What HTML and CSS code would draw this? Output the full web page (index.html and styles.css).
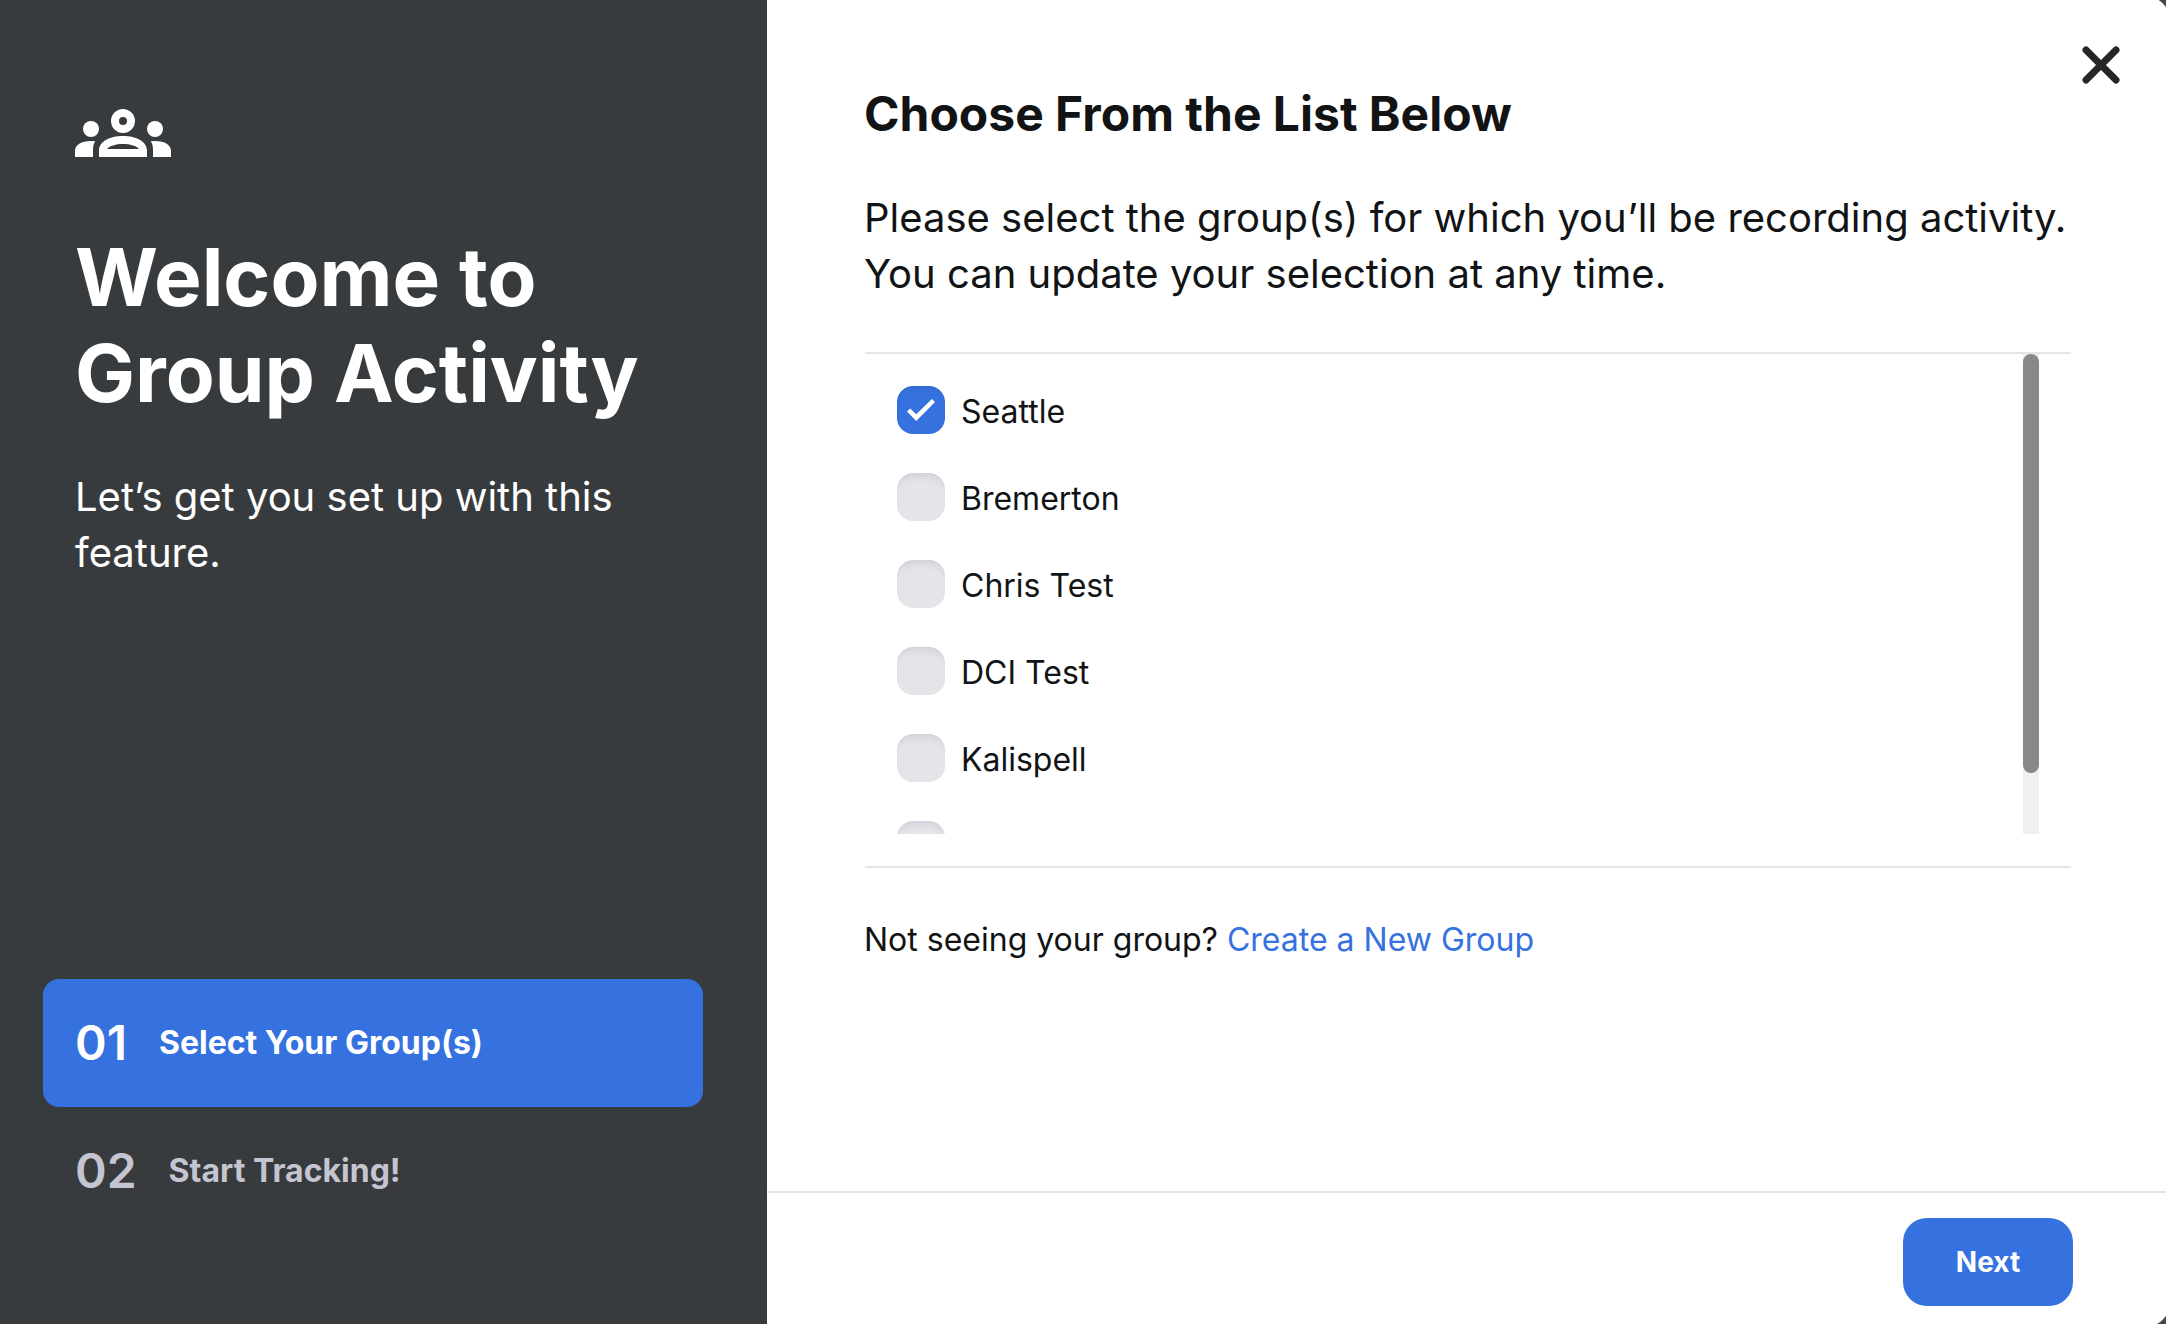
FILE: index.html
```html
<!DOCTYPE html>
<html lang="en">
<head>
    <meta charset="UTF-8">
    <meta name="viewport" content="width=device-width, initial-scale=1.0">
    <title>Group Activity</title>
    <link rel="stylesheet" href="styles.css">
</head>
<body>

    <div class="modal" role="dialog" aria-labelledby="modal-title">

        <!-- left : intro + steps -->
        <aside class="intro">
            <svg class="intro-icon" viewBox="0 0 96 48" fill="#fff" aria-hidden="true">
                <path fill-rule="evenodd" d="M48 0a12 12 0 1 1 0 24a12 12 0 1 1 0-24zM48 8a4 4 0 1 0 0 8a4 4 0 1 0 0-8z"/>
                <circle cx="16" cy="20" r="8"/>
                <circle cx="80" cy="20" r="8"/>
                <path fill-rule="evenodd" d="M24 48v-6.500C24 33 34 27 48 27s24 6 24 14.500V48zM32 40h32c-2-3-9-5-16-5s-14 2-16 5z"/>
                <path d="M0 48v-6C0 36 6 32 16 32q2 0 4.300.300C18.500 35 18 37.500 18 41v7z"/>
                <path d="M96 48v-6c0-6-6-10-16-10q-2 0-4.300.300C77.500 35 78 37.500 78 41v7z"/>
            </svg>
            <h1 id="modal-title">Welcome to Group Activity</h1>
            <p>Let’s get you set up with this feature.</p>

            <ol class="steps">
                <li class="step active"><span class="step-number">01</span>Select Your Group(s)</li>
                <li class="step"><span class="step-number">02</span>Start Tracking!</li>
            </ol>
        </aside>

        <!-- right : group list -->
        <main class="panel">
            <button class="close" type="button" aria-label="Close">
                <svg viewBox="0 0 38 38" fill="none" stroke="#242628" stroke-width="7" stroke-linecap="round" aria-hidden="true">
                    <path d="M4 4l30 30M34 4l-30 30"/>
                </svg>
            </button>

            <div class="content">
                <h2>Choose From the List Below</h2>
                <p class="lead">Please select the group(s) for which you’ll be recording activity. You can update your selection at any time.</p>

                <div class="list-box">
                    <div class="group-list">
                        <label class="group"><input type="checkbox" checked><span>Seattle</span></label>
                        <label class="group"><input type="checkbox"><span>Bremerton</span></label>
                        <label class="group"><input type="checkbox"><span>Chris Test</span></label>
                        <label class="group"><input type="checkbox"><span>DCI Test</span></label>
                        <label class="group"><input type="checkbox"><span>Kalispell</span></label>
                        <label class="group"><input type="checkbox" aria-label="Group"></label>
                    </div>
                    <div class="scrollbar"><div class="scrollbar-thumb"></div></div>
                </div>

                <p class="hint">Not seeing your group? <a href="#">Create a New Group</a></p>
            </div>

            <footer class="actions">
                <button class="next" type="button">Next</button>
            </footer>
        </main>

    </div>

</body>
</html>
```
FILE: styles.css
```css
*{
    margin: 0;
    padding: 0;
    box-sizing: border-box;
}

body{
    background-color: #454748;
    color: #111315;
    font-family: Inter, "Liberation Sans", sans-serif;
    font-size: 32px;
    line-height: 40px;
    height: 100vh;
    overflow: hidden;
}

button{
    border: 0;
    font-family: inherit;
    cursor: pointer;
}

/* modal is a little larger than the window, only the tips of the corners show */
.modal{
    display: grid;
    grid-template-columns: 767px minmax(0, 1fr);
    height: calc(100vh + 11px);
    margin: -6px -6px 0 0;
    border-radius: 0 32px 32px 0;
    overflow: hidden;
    background-color: #fff;
}

/* left */
.intro{
    display: flex;
    flex-direction: column;
    padding: 115px 64px 94px 43px;
    background-color: #383b3d;
    color: #fff;
}

.intro-icon{
    width: 96px;
    height: 48px;
    margin-left: 32px;
}

.intro h1{
    margin: 72px 0 0 32px;
    font-size: 80px;
    line-height: 96px;
    font-weight: 700;
}

.intro p{
    margin: 48px 0 0 32px;
    font-size: 40px;
    line-height: 56px;
}

.steps{
    margin-top: auto;
    list-style: none;
}

.step{
    display: flex;
    align-items: center;
    gap: 32px;
    height: 128px;
    padding: 0 32px;
    border-radius: 16px;
    color: #c5c5d2;
    font-weight: 700;
}

.step.active{
    background-color: #3572e0;
    color: #fff;
}

.step-number{
    font-size: 48px;
    font-weight: 600;
}

/* right */
.panel{
    position: relative;
    display: flex;
    flex-direction: column;
}

.close{
    position: absolute;
    top: 52px;
    right: 52px;
    width: 38px;
    height: 38px;
    background: none;
}

.close svg{
    display: block;
}

.content{
    flex: 1;
    padding: 90px 100px 0 97px;
}

.content h2{
    font-size: 48px;
    line-height: 60px;
    font-weight: 700;
}

.lead{
    margin-top: 46px;
    font-size: 40px;
    line-height: 56px;
}

.list-box{
    display: flex;
    margin: 50px 1px 0;
    padding: 0 32px 32px;
    border-top: 2px solid #e4e4ea;
    border-bottom: 2px solid #e4e4ea;
}

.group-list{
    flex: 1;
    height: 480px;
    padding-top: 32px;
    overflow-y: scroll;
    scrollbar-width: none;
}

.scrollbar{
    width: 16px;
    background-color: #f0f0f0;
}

.scrollbar-thumb{
    height: 419px;
    border-radius: 8px;
    background-color: #888;
}

.group{
    display: flex;
    align-items: center;
    gap: 16px;
    height: 48px;
    margin-bottom: 39px;
}

.group:last-child{
    margin-bottom: 35px;
}

.group span{
    padding-top: 4px;
}

.group input{
    appearance: none;
    width: 48px;
    height: 48px;
    border-radius: 16px;
    background-color: #e4e5e9;
    box-shadow: inset 0 8px 8px -6px rgba(60, 60, 90, 0.15);
}

.group input:checked{
    display: grid;
    place-items: center;
    background-color: #3572e0;
}

/* tick */
.group input:checked::before{
    content: "";
    width: 28px;
    height: 22px;
    background-color: #fff;
    clip-path: polygon(0 57%, 11% 43%, 33% 69%, 89% 0, 100% 14%, 33% 100%);
}

.hint{
    margin-top: 52px;
}

.hint a{
    color: #3572e0;
    text-decoration: none;
}

.actions{
    display: flex;
    justify-content: flex-end;
    padding: 25px 99px 23px;
    border-top: 2px solid #e4e4ea;
}

.next{
    width: 170px;
    height: 88px;
    border-radius: 24px;
    background-color: #3572e0;
    color: #fff;
    font-size: 28px;
    font-weight: 700;
}
```
